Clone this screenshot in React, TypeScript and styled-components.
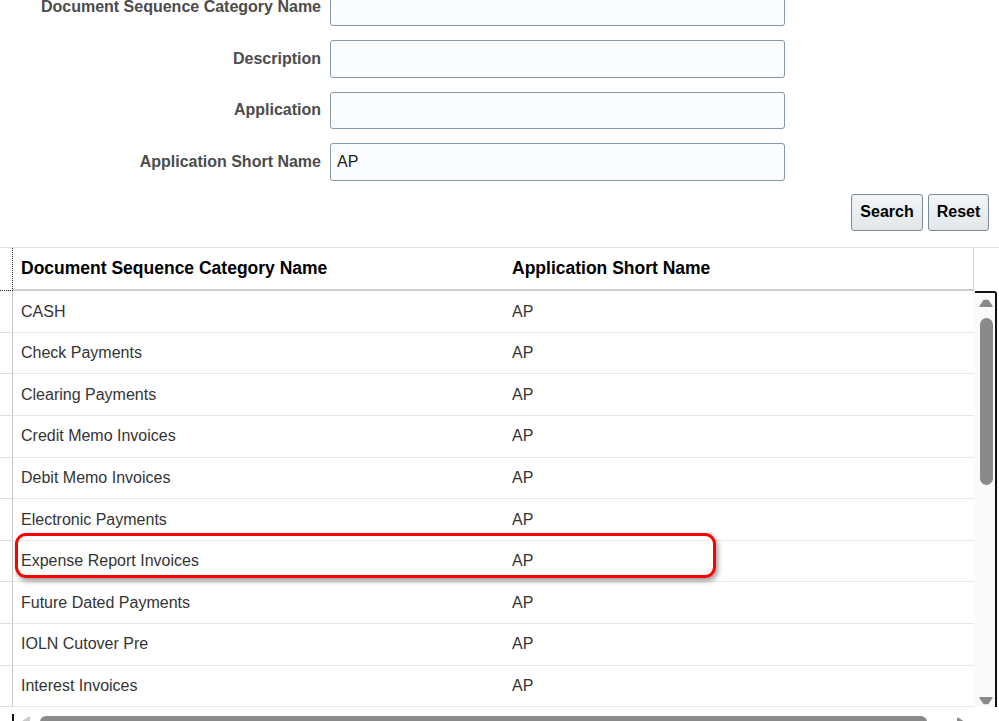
import React from 'react';
import styled, { createGlobalStyle } from 'styled-components';

const GlobalStyle = createGlobalStyle`
  html, body {
    margin: 0;
    padding: 0;
    background: #ffffff;
    overflow: hidden;
  }
  body {
    font-family: "Liberation Sans", Arial, sans-serif;
  }
`;

const Page = styled.div`
  width: 999px;
  height: 721px;
  overflow: hidden;
  display: flex;
  flex-direction: column;
`;

const SearchForm = styled.div`
  display: grid;
  grid-template-columns: 321px 455px;
  grid-auto-rows: 37.3px;
  column-gap: 9px;
  row-gap: 14.2px;
  align-items: center;
  margin-top: -11.2px;
`;

const Label = styled.label`
  text-align: right;
  font-weight: 700;
  font-size: 16px;
  color: #4c4c4c;
`;

const Field = styled.input`
  box-sizing: border-box;
  height: 37.3px;
  width: 100%;
  border: 1px solid #8797a3;
  border-radius: 3px;
  background: #fbfcfe;
  padding: 0 6px;
  font-family: "Liberation Sans", Arial, sans-serif;
  font-size: 16px;
  color: #222;
  outline: none;
`;

const ButtonBar = styled.div`
  display: flex;
  justify-content: flex-end;
  gap: 5px;
  padding-right: 10px;
  margin-top: 13px;
`;

const Button = styled.button<{ $w: number }>`
  box-sizing: border-box;
  width: ${p => p.$w}px;
  height: 37px;
  padding: 0;
  border: 1px solid #7c8c97;
  border-radius: 3px;
  background: linear-gradient(#f3f5f7, #e2e6e9);
  font-family: "Liberation Sans", Arial, sans-serif;
  font-weight: 700;
  font-size: 16px;
  color: #000;
`;

const TableWrap = styled.div`
  position: relative;
  margin-top: 16.7px;
  border-top: 1px solid #dde1e5;
  display: flex;
  flex-direction: column;
`;

const HeaderRow = styled.div`
  display: grid;
  grid-template-columns: 13px 491px 470px 24px;
  height: 43px;
`;

const Gutter = styled.div<{ $head?: boolean }>`
  border-right: 1px ${p => (p.$head ? 'dotted #222' : 'solid #c2c7cc')};
  border-bottom: 1px ${p => (p.$head ? 'dotted #222' : 'solid #d6dee6')};
`;

const HeadCell = styled.div<{ $last?: boolean }>`
  display: flex;
  align-items: center;
  padding-left: 8px;
  font-weight: 700;
  font-size: 17.5px;
  color: #000;
  border-bottom: 2px solid #c9ced3;
  border-right: ${p => (p.$last ? '1px solid #d0d4d8' : 'none')};
`;

const BodyArea = styled.div`
  display: flex;
  height: 416px;
`;

const Rows = styled.div`
  width: 975px;
  display: flex;
  flex-direction: column;
`;

const Row = styled.div`
  display: grid;
  grid-template-columns: 13px 491px 470px;
  height: 41.6px;
  flex-shrink: 0;
`;

const Cell = styled.div`
  display: flex;
  align-items: center;
  padding-left: 8px;
  font-size: 16px;
  color: #343434;
  border-bottom: 1px solid #e8e8e8;
`;

const VScroll = styled.div`
  box-sizing: border-box;
  width: 22px;
  margin-right: 2px;
  border-top: 2px solid #111;
  border-right: 2px solid #111;
  border-top-right-radius: 3px;
  background: #fafafa;
  display: flex;
  flex-direction: column;
  align-items: center;
  padding: 6px 0 2px 2px;
`;

const Thumb = styled.div`
  width: 13px;
  height: 167px;
  margin-top: 11px;
  border-radius: 7px;
  background: #8a8a8a;
`;

const Spacer = styled.div`
  flex: 1;
`;

const HScroll = styled.div`
  display: flex;
  align-items: flex-start;
  height: 14px;
`;

const HLeftEdge = styled.div`
  width: 14px;
  height: 14px;
  border-right: 2px solid #111;
  margin-top: 7px;
  box-sizing: border-box;
`;

const HThumb = styled.div`
  width: 887px;
  height: 12px;
  margin: 9px 0 0 10px;
  border-radius: 6px;
  background: #8a8a8a;
`;

const Highlight = styled.div`
  position: absolute;
  left: 15px;
  top: 285px;
  width: 701px;
  height: 45px;
  box-sizing: border-box;
  border: 3px solid #ff0000;
  border-radius: 11px;
  box-shadow: 2px 3px 5px rgba(0, 0, 0, 0.4);
  pointer-events: none;
`;

const Arrow = ({ dir, color = '#8a8a8a', style }: { dir: 'up' | 'down' | 'left' | 'right'; color?: string; style?: React.CSSProperties }) => {
  const pts = {
    up: '1,11 7,2 13,2 19,11',
    down: '1,1 19,1 13,10 7,10',
    left: '11,1 11,19 2,13 2,7',
    right: '1,1 1,19 10,13 10,7',
  }[dir];
  const vertical = dir === 'up' || dir === 'down';
  return (
    <svg width={vertical ? 14 : 8} height={vertical ? 8 : 14} viewBox={vertical ? '0 0 20 12' : '0 0 12 20'} style={style}>
      <polygon points={pts} fill={color} strokeLinejoin="round" stroke={color} strokeWidth="2" />
    </svg>
  );
};

const fields = [
  { label: 'Document Sequence Category Name', value: '' },
  { label: 'Description', value: '' },
  { label: 'Application', value: '' },
  { label: 'Application Short Name', value: 'AP' },
];

const rows = [
  'CASH',
  'Check Payments',
  'Clearing Payments',
  'Credit Memo Invoices',
  'Debit Memo Invoices',
  'Electronic Payments',
  'Expense Report Invoices',
  'Future Dated Payments',
  'IOLN Cutover Pre',
  'Interest Invoices',
];

export default function App() {
  return (
    <Page>
      <GlobalStyle />
      <SearchForm>
        {fields.map(f => (
          <React.Fragment key={f.label}>
            <Label>{f.label}</Label>
            <Field defaultValue={f.value} />
          </React.Fragment>
        ))}
      </SearchForm>
      <ButtonBar>
        <Button $w={72}>Search</Button>
        <Button $w={61}>Reset</Button>
      </ButtonBar>
      <TableWrap>
        <HeaderRow>
          <Gutter $head />
          <HeadCell>Document Sequence Category Name</HeadCell>
          <HeadCell $last>Application Short Name</HeadCell>
          <div />
        </HeaderRow>
        <BodyArea>
          <Rows>
            {rows.map(name => (
              <Row key={name}>
                <Gutter />
                <Cell>{name}</Cell>
                <Cell>AP</Cell>
              </Row>
            ))}
          </Rows>
          <VScroll>
            <Arrow dir="up" />
            <Thumb />
            <Spacer />
            <Arrow dir="down" />
          </VScroll>
        </BodyArea>
        <HScroll>
          <HLeftEdge />
          <Arrow dir="left" color="#c8c8c8" style={{ marginLeft: 8, marginTop: 9 }} />
          <HThumb />
          <Arrow dir="right" color="#8a8a8a" style={{ marginLeft: 30, marginTop: 10 }} />
        </HScroll>
        <Highlight />
      </TableWrap>
    </Page>
  );
}
